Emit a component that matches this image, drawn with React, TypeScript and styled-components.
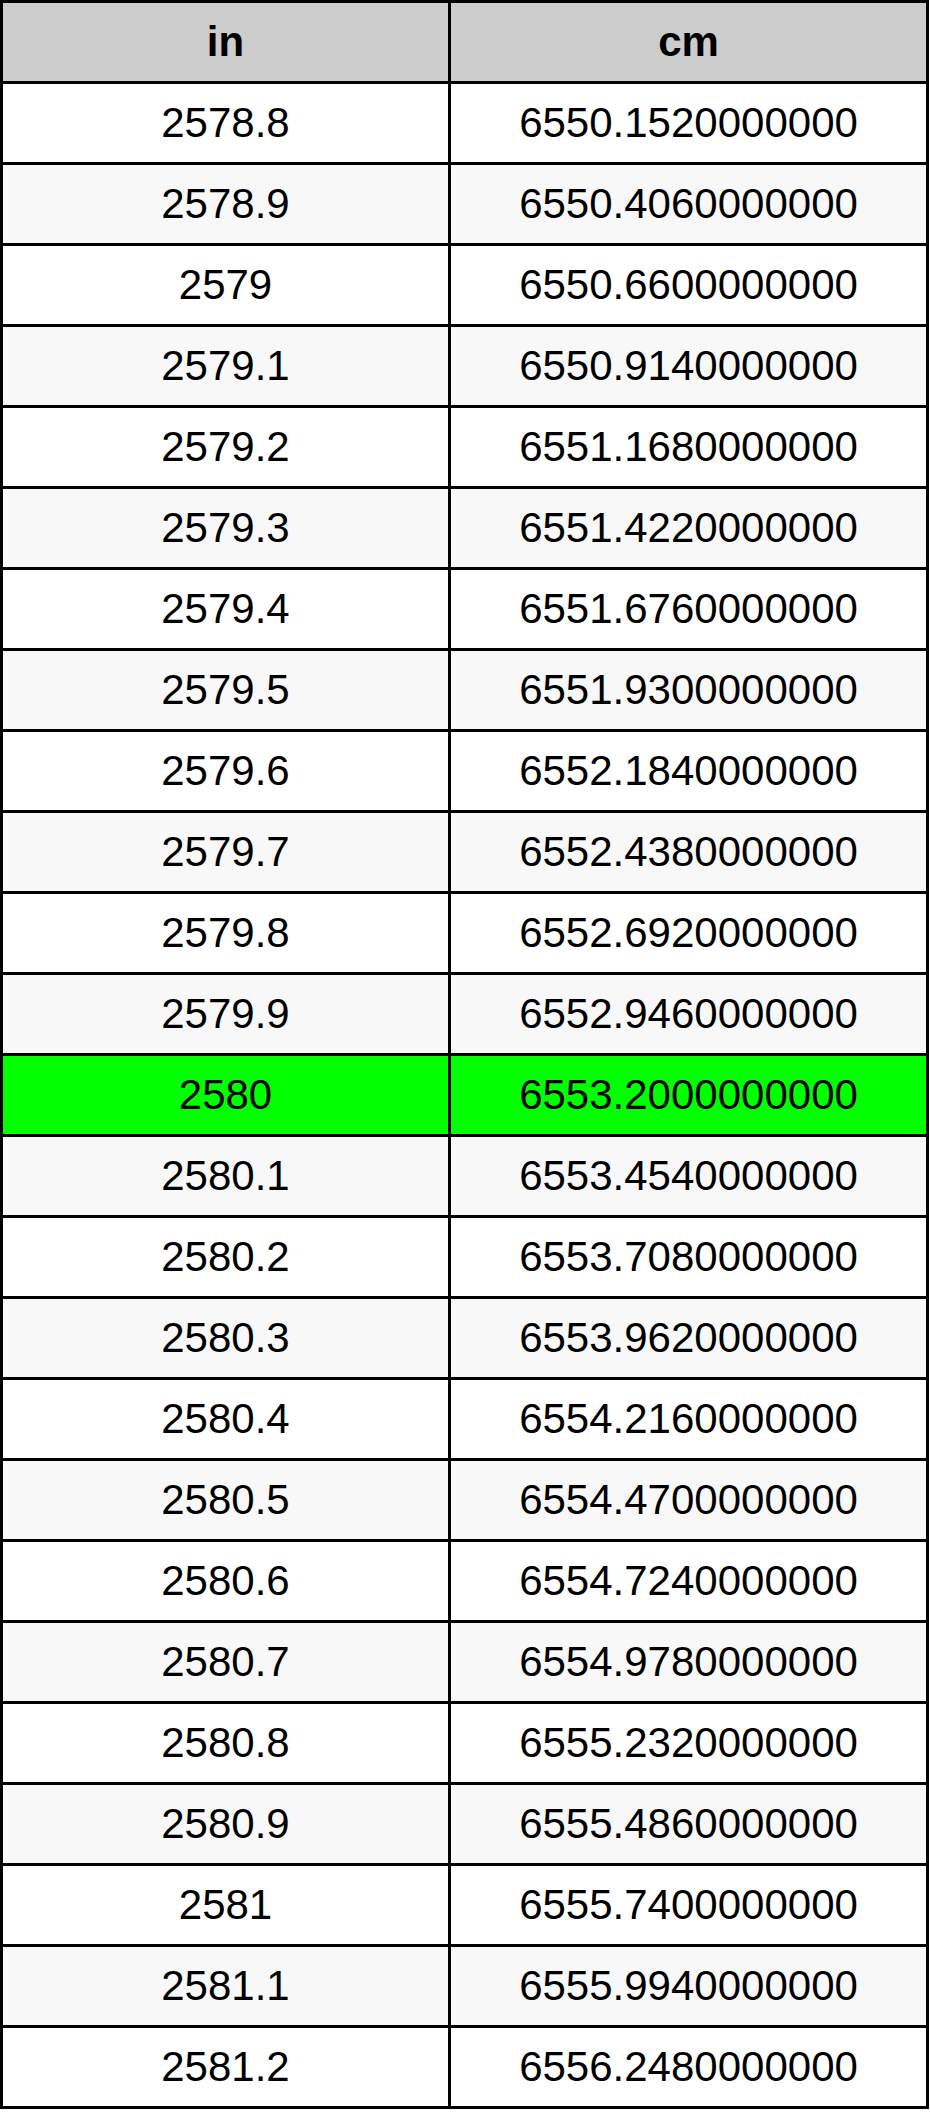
import styled, {createGlobalStyle} from 'styled-components'

const GlobalStyle = createGlobalStyle`
    html, body {
        margin: 0;
        padding: 0;
        background: #ffffff;
    }
`

type RowKind = 'plain' | 'striped' | 'current'

interface ConversionRow {
    inches: string
    cm: string
    kind: RowKind
}

const CURRENT = 25800

// tenths of an inch, kept as integers so the cm values stay exact
function buildRows(): ConversionRow[] {
    const rows: ConversionRow[] = []
    for (let n = 25788; n <= 25812; n++) {
        const v = n * 254
        const whole = Math.floor(v / 1000)
        const frac = String(v % 1000).padStart(3, '0')
        const inches = n % 10 === 0 ? String(n / 10) : `${Math.floor(n / 10)}.${n % 10}`
        const index = n - 25788
        rows.push({
            inches,
            cm: `${whole}.${frac}0000000`,
            kind: n === CURRENT ? 'current' : index % 2 === 0 ? 'plain' : 'striped',
        })
    }
    return rows
}

const rows = buildRows()

export default function App() {
    return (
        <>
            <GlobalStyle/>
            <Table>
                <thead>
                <tr>
                    <HeadCell $width={445}>in</HeadCell>
                    <HeadCell $width={475}>cm</HeadCell>
                </tr>
                </thead>
                <tbody>
                {rows.map((row) => (
                    <Row key={row.inches} $kind={row.kind}>
                        <Cell>{row.inches}</Cell>
                        <Cell>{row.cm}</Cell>
                    </Row>
                ))}
                </tbody>
            </Table>
        </>
    )
}

const rowColors: Record<RowKind, string> = {
    plain: '#ffffff',
    striped: '#f8f8f8',
    current: '#00ff00',
}

const Table = styled.table`
    border-collapse: collapse;
    table-layout: fixed;
    width: 929px;
    font-family: 'Liberation Sans', Arial, Helvetica, sans-serif;
    color: #000000;
`

const HeadCell = styled.th<{ $width: number }>`
    width: ${({$width}) => $width}px;
    height: 78px;
    padding: 0;
    border: 3px solid #000000;
    background: #cccccc;
    font-size: 42px;
    font-weight: 700;
    text-align: center;
    vertical-align: middle;
`

const Row = styled.tr<{ $kind: RowKind }>`
    background: ${({$kind}) => rowColors[$kind]};
`

const Cell = styled.td`
    height: 78px;
    padding: 0;
    border: 3px solid #000000;
    font-size: 42px;
    text-align: center;
    vertical-align: middle;
`
